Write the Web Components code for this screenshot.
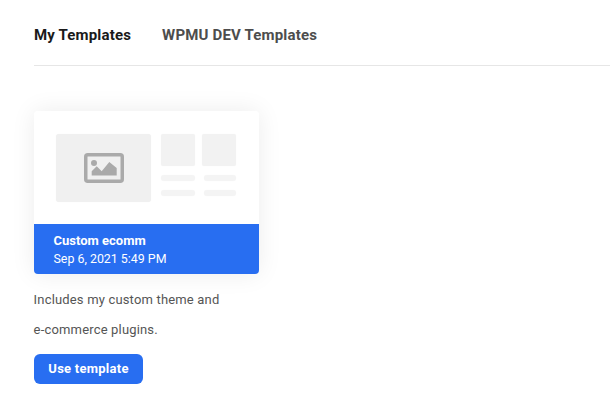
<!DOCTYPE html>
<html><head><meta charset="utf-8">
<style>
html,body{margin:0;padding:0;background:#fff;overflow:hidden}
body{font-family:Roboto,"Liberation Sans",sans-serif;width:610px;height:416px}
</style></head><body>
<tpl-page>
  <tpl-tabs></tpl-tabs>
  <tpl-card name="Custom ecomm" date="Sep 6, 2021 5:49 PM" desc1="Includes my custom theme and" desc2="e-commerce plugins."></tpl-card>
</tpl-page>
<script>
class TplPage extends HTMLElement{constructor(){super();this.attachShadow({mode:'open'}).innerHTML=`<style>
:host{display:block;padding:0 0 0 34px}
</style><slot></slot>`}}
class TplTabs extends HTMLElement{constructor(){super();this.attachShadow({mode:'open'}).innerHTML=`<style>
:host{display:flex;gap:31px;height:65px;border-bottom:1px solid #e6e6e6;align-items:flex-start}
span{font:700 15px/18px Roboto,sans-serif;letter-spacing:.17px;margin-top:26px;color:#1a1a1a;white-space:nowrap}
span+span{color:#4d4d4d}
</style><span>My Templates</span><span>WPMU DEV Templates</span>`}}
class TplThumb extends HTMLElement{constructor(){super();this.attachShadow({mode:'open'}).innerHTML=`<style>
:host{display:flex;gap:10px;width:225px;height:113px;box-sizing:border-box;padding:23px 0 0 22px;background:#fff;border-radius:4px 4px 0 0}
.big{width:95px;height:68px;background:#f0f0f0;border-radius:3px;display:flex;align-items:center;justify-content:center;box-shadow:0 0 1px #f0f0f0}
.big svg{display:block;margin-left:1px;margin-top:-1px}
.right{width:75px;display:flex;flex-direction:column}
.sqs{display:flex;gap:7px}
.sq{width:34px;height:32px;background:#f2f2f2;border-radius:2px;box-shadow:0 0 1px #f2f2f2}
.rows{display:grid;grid-template-columns:34px 32px;column-gap:9px;row-gap:9px;margin-top:9px}
.rows i{display:block;height:6px;background:#f4f4f4;border-radius:3px;box-shadow:0 0 1px #f4f4f4}
</style>
<div class="big"><svg width="40" height="30" viewBox="0 0 40 30"><rect x="1.75" y="1.75" width="36.5" height="26.5" rx="2" fill="none" stroke="#aaa" stroke-width="3.5"/><circle cx="10" cy="10" r="3" fill="#aaa"/><path d="M7.7 22.5V18.3l5-5 5 5 7.6-9.3 7.4 6v7.5z" fill="#aaa"/></svg></div>
<div class="right"><div class="sqs"><div class="sq"></div><div class="sq"></div></div>
<div class="rows"><i></i><i></i><i></i><i></i></div></div>`}}
class TplCard extends HTMLElement{constructor(){super();const a=n=>this.getAttribute(n);this.attachShadow({mode:'open'}).innerHTML=`<style>
:host{display:block;width:225px;margin-top:45px;font-family:Roboto,sans-serif}
.card{border-radius:4px;box-shadow:0 0 24px rgba(0,0,0,.08);background:#fff}
.meta{height:50px;background:#286ef1;border-radius:0 0 4px 4px;box-sizing:border-box;padding:9px 0 0 19.5px;color:#fff}
.n{font:700 13px/15px Roboto,sans-serif}
.d{font:400 12.4px/15px Roboto,sans-serif;margin-top:3px}
p{margin:11px 0 0 -.4px;font:400 13px/30px Roboto,sans-serif;letter-spacing:.17px;color:#555;white-space:nowrap}
button{display:block;margin-top:9px;width:109px;height:30px;border:0;border-radius:6px;background:#286ef1;color:#fff;font:700 13px/30px Roboto,sans-serif;letter-spacing:.25px;padding:0}
</style><div class="card"><tpl-thumb></tpl-thumb><div class="meta"><div class="n">${a('name')}</div><div class="d">${a('date')}</div></div></div>
<p>${a('desc1')}<br>${a('desc2')}</p><button>Use template</button>`}}
customElements.define('tpl-page',TplPage);
customElements.define('tpl-tabs',TplTabs);
customElements.define('tpl-thumb',TplThumb);
customElements.define('tpl-card',TplCard);
</script>
</body></html>
